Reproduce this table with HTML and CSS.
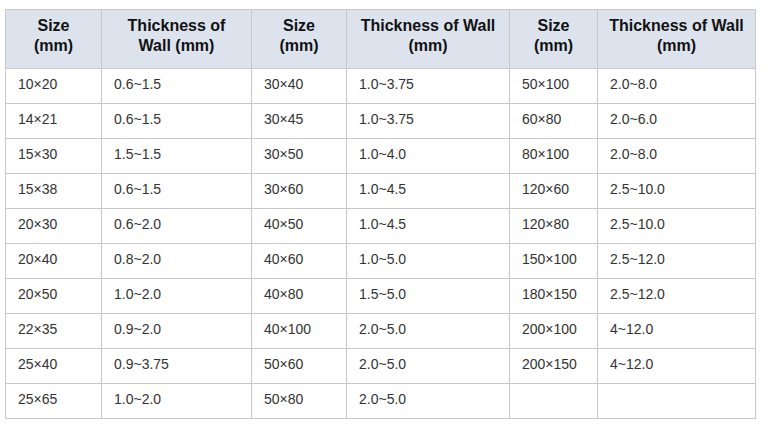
FILE: index.html
```html
<!DOCTYPE html>
<html>
<head>
<meta charset="utf-8">
<link rel="stylesheet" href="styles.css">
</head>
<body>
<div class="page">
<table class="spec">
<colgroup>
<col class="c1"><col class="c2"><col class="c3"><col class="c4"><col class="c5"><col class="c6">
</colgroup>
<thead>
<tr>
<th>Size<br>(mm)</th>
<th>Thickness of<br>Wall (mm)</th>
<th>Size<br>(mm)</th>
<th>Thickness of Wall<br>(mm)</th>
<th>Size<br>(mm)</th>
<th>Thickness of Wall<br>(mm)</th>
</tr>
</thead>
<tbody>
<tr><td>10×20</td><td>0.6~1.5</td><td>30×40</td><td>1.0~3.75</td><td>50×100</td><td>2.0~8.0</td></tr>
<tr><td>14×21</td><td>0.6~1.5</td><td>30×45</td><td>1.0~3.75</td><td>60×80</td><td>2.0~6.0</td></tr>
<tr><td>15×30</td><td>1.5~1.5</td><td>30×50</td><td>1.0~4.0</td><td>80×100</td><td>2.0~8.0</td></tr>
<tr><td>15×38</td><td>0.6~1.5</td><td>30×60</td><td>1.0~4.5</td><td>120×60</td><td>2.5~10.0</td></tr>
<tr><td>20×30</td><td>0.6~2.0</td><td>40×50</td><td>1.0~4.5</td><td>120×80</td><td>2.5~10.0</td></tr>
<tr><td>20×40</td><td>0.8~2.0</td><td>40×60</td><td>1.0~5.0</td><td>150×100</td><td>2.5~12.0</td></tr>
<tr><td>20×50</td><td>1.0~2.0</td><td>40×80</td><td>1.5~5.0</td><td>180×150</td><td>2.5~12.0</td></tr>
<tr><td>22×35</td><td>0.9~2.0</td><td>40×100</td><td>2.0~5.0</td><td>200×100</td><td>4~12.0</td></tr>
<tr><td>25×40</td><td>0.9~3.75</td><td>50×60</td><td>2.0~5.0</td><td>200×150</td><td>4~12.0</td></tr>
<tr><td>25×65</td><td>1.0~2.0</td><td>50×80</td><td>2.0~5.0</td><td></td><td></td></tr>
</tbody>
</table>
</div>
</body>
</html>
```

FILE: styles.css
```css
html, body {
  margin: 0;
  padding: 0;
  background: #ffffff;
}
.page {
  padding: 9px 0 0 5px;
}
.spec {
  border-collapse: collapse;
  table-layout: fixed;
  width: 750px;
  font-family: "Liberation Sans", Arial, sans-serif;
}
.c1 { width: 96px; }
.c2 { width: 150px; }
.c3 { width: 95px; }
.c4 { width: 163px; }
.c5 { width: 88px; }
.c6 { width: 158px; }
.spec th,
.spec td {
  border: 1px solid #c8c8c8;
  padding: 0;
}
.spec th {
  background: #dce3ed;
  color: #111111;
  font-size: 16px;
  font-weight: bold;
  line-height: 20px;
  text-align: center;
  vertical-align: top;
  height: 52px;
  padding-top: 6px;
  white-space: nowrap;
}
.spec td {
  color: #333333;
  font-size: 14px;
  line-height: 20px;
  text-align: left;
  vertical-align: top;
  height: 29px;
  padding: 5px 0 0 12px;
  white-space: nowrap;
}
```
